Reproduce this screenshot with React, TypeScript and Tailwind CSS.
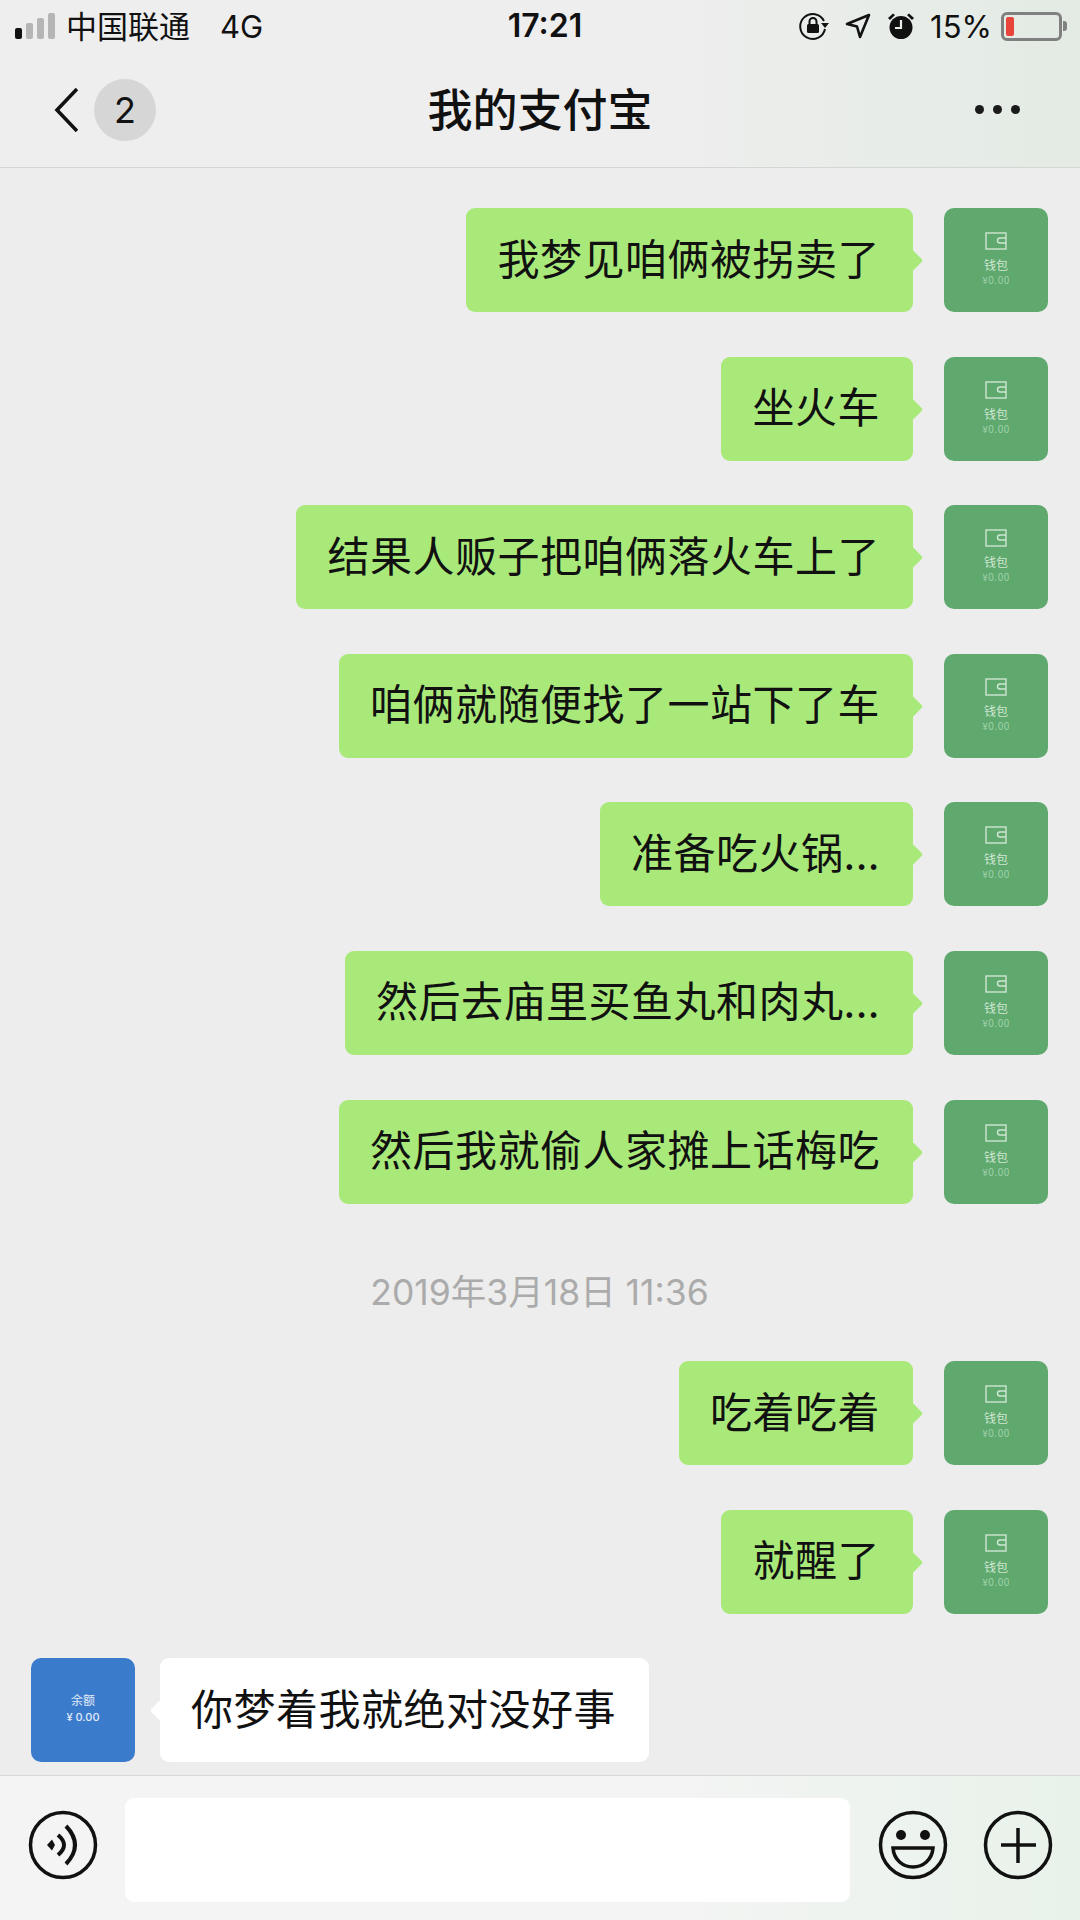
import React from "react";

const cjk = "font-['Noto_Sans_CJK_SC','Noto_Sans',sans-serif]";

const messages = [
  "我梦见咱俩被拐卖了",
  "坐火车",
  "结果人贩子把咱俩落火车上了",
  "咱俩就随便找了一站下了车",
  "准备吃火锅...",
  "然后去庙里买鱼丸和肉丸...",
  "然后我就偷人家摊上话梅吃",
];

const WalletAvatar = () => (
  <div className="flex h-[104px] w-[104px] shrink-0 flex-col items-center rounded-[10px] bg-[#5fa96f] pt-[24px]">
    <svg width="22" height="18" viewBox="0 0 22 18" fill="none" stroke="#cfe6d2" strokeWidth="1.4">
      <rect x="1" y="1" width="20" height="16" />
      <path d="M21 6h-6a2.500 2.500 0 0 0 0 5h6" />
    </svg>
    <div className="mt-[7px] text-[12px] leading-[16px] text-[#cfe6d2]">钱包</div>
    <div className="text-[10px] leading-[13px] tracking-[0.5px] text-[#9fd0a9]">¥0.00</div>
  </div>
);

const OutMessage = ({ text }: { text: string }) => (
  <div className="flex h-[104px] items-center justify-end gap-[31px]">
    <div className="relative flex h-[104px] items-center rounded-[9px] bg-[#a9e97a] pb-[7px] pl-[31px] pr-[33px] text-[42px] leading-none tracking-[0.5px] text-[#111]">
      {text}
      <div className="absolute right-[-7px] top-[45px] h-[15px] w-[15px] rotate-45 rounded-[2px] bg-[#a9e97a]" />
    </div>
    <WalletAvatar />
  </div>
);

const StatusBar = () => (
  <div className="grid h-[56px] grid-cols-3 items-center pb-[4px] text-[#111]">
    <div className="flex items-center pl-[15px]">
      <div className="flex items-end gap-[4px]">
        <div className="h-[11px] w-[7px] rounded-[2px] bg-[#111]" />
        <div className="h-[16px] w-[7px] rounded-[2px] bg-[#b5b5b5]" />
        <div className="h-[21px] w-[7px] rounded-[2px] bg-[#b5b5b5]" />
        <div className="h-[26px] w-[7px] rounded-[2px] bg-[#b5b5b5]" />
      </div>
      <span className="ml-[11px] whitespace-nowrap pb-[3px] text-[31px] leading-none">中国联通</span>
      <span className="ml-[30px] font-['Inter'] text-[31px] leading-none">4G</span>
    </div>
    <div className="pl-[10px] text-center font-['Inter'] text-[32px] font-semibold leading-none">17:21</div>
    <div className="flex items-center justify-end pr-[13px]">
      <svg width="32" height="30" viewBox="0 0 32 30" fill="none" stroke="#111" strokeWidth="2">
        <path d="M26 10A12.500 12.500 0 1 0 27 18" />
        <path d="M23 12h8l-4 5z" fill="#111" stroke="none" />
        <rect x="9" y="13" width="12" height="9" rx="1.500" fill="#111" stroke="none" />
        <path d="M11.500 13v-2.500a3.500 3.500 0 0 1 7 0V13" />
      </svg>
      <svg className="ml-[15px]" width="26" height="26" viewBox="0 0 26 26" fill="none" stroke="#111" strokeWidth="2.600" strokeLinejoin="round">
        <path d="M24 2 2 11l10 2.500L15 24z" />
      </svg>
      <svg className="ml-[16px]" width="28" height="28" viewBox="0 0 28 28" fill="#111">
        <circle cx="14" cy="15.500" r="11.500" />
        <path d="M1 6 6 1.500l2 1.500-5 5zM27 6l-5-4.500-2 1.500 5 5z" />
        <path d="M14 8v8H8" fill="none" stroke="#e8ede8" strokeWidth="2.200" />
      </svg>
      <span className="ml-[15px] font-['Inter'] text-[31px] leading-none">15%</span>
      <div className="ml-[9px] flex h-[29px] w-[61px] items-center rounded-[6px] border-[3px] border-[#808080] p-[2px]">
        <div className="h-full w-[8px] rounded-[2px] bg-[#e8443a]" />
      </div>
      <div className="ml-[1px] h-[10px] w-[4px] rounded-r-[3px] bg-[#808080]" />
    </div>
  </div>
);

const NavBar = () => (
  <div className="grid h-[112px] grid-cols-[1fr_auto_1fr] items-center border-b border-[#d5d5d5] pb-[2px] text-[#111]">
    <div className="flex items-center pb-[2px] pl-[54px]">
      <svg width="24" height="44" viewBox="0 0 24 44" fill="none" stroke="#111" strokeWidth="3.600">
        <path d="M23 1 3 22l20 21" />
      </svg>
      <div className="ml-[16px] flex h-[62px] w-[62px] items-center justify-center rounded-full bg-[#d6d6d6] font-['Inter'] text-[36px]">
        2
      </div>
    </div>
    <div className="pb-[6px] text-[45px] font-medium leading-none">我的支付宝</div>
    <div className="flex justify-end gap-[9px] pb-[2px] pr-[60px]">
      <div className="h-[9px] w-[9px] rounded-full bg-[#1a1a1a]" />
      <div className="h-[9px] w-[9px] rounded-full bg-[#1a1a1a]" />
      <div className="h-[9px] w-[9px] rounded-full bg-[#1a1a1a]" />
    </div>
  </div>
);

const InputBar = () => (
  <div className="flex h-[145px] items-start border-t border-[#d8d8d8] bg-linear-to-r from-[#f4f4f4] via-[#f4f4f4] via-60% to-[#e8f2ea] pl-[28px] pt-[22px]">
    <svg className="mt-[12px]" width="70" height="70" viewBox="0 0 70 70" fill="none" stroke="#111" strokeWidth="3.500">
      <circle cx="35" cy="35" r="32.500" />
      <path d="m19 35 5-5.500 3 5.500-3 5.500z" fill="#111" stroke="none" />
      <path d="M30 25q12 10 0 20" strokeWidth="4" />
      <path d="M38 16q18 19 0 38" strokeWidth="4" />
    </svg>
    <div className="ml-[27px] h-[104px] w-[725px] rounded-[9px] bg-white" />
    <svg className="ml-[28px] mt-[12px]" width="70" height="70" viewBox="0 0 70 70" fill="none" stroke="#111" strokeWidth="3.500">
      <circle cx="35" cy="35" r="32.500" />
      <circle cx="23" cy="25" r="5" fill="#111" stroke="none" />
      <circle cx="47" cy="25" r="5" fill="#111" stroke="none" />
      <path d="M15 38h40c-1 12-10 19-20 19S16 50 15 38z" />
    </svg>
    <svg className="ml-[35px] mt-[12px]" width="70" height="70" viewBox="0 0 70 70" fill="none" stroke="#111" strokeWidth="3.500">
      <circle cx="35" cy="35" r="32.500" />
      <path d="M35 18v35M18 35h35" />
    </svg>
  </div>
);

export default function App() {
  return (
    <div className={`flex h-[1920px] w-[1080px] flex-col overflow-hidden bg-[#ededed] ${cjk}`}>
      <div className="bg-linear-to-r from-[#eeeeee] via-[#eeeeee] via-60% to-[#e3ebe4]">
        <StatusBar />
        <NavBar />
      </div>

      <div className="flex flex-1 flex-col pl-[31px] pr-[32px] pt-[40px]">
        <div className="flex flex-col gap-[44.6px]">
          {messages.map((m) => (
            <OutMessage key={m} text={m} />
          ))}
        </div>

        <div className="mt-[62px] text-center font-['Inter','Noto_Sans_CJK_SC',sans-serif] text-[35.5px] leading-[54px] text-[#ababab]">
          2019年3月18日 11:36
        </div>

        <div className="mt-[41.5px] flex flex-col gap-[44.6px]">
          <OutMessage text="吃着吃着" />
          <OutMessage text="就醒了" />
        </div>

        <div className="mt-[44.6px] flex h-[104px] items-center gap-[25px]">
          <div className="flex h-[104px] w-[104px] shrink-0 flex-col items-center justify-center rounded-[10px] bg-[#3b7bcc] pb-[4px] text-white/85">
            <div className="text-[12px] leading-[16px]">余额</div>
            <div className="mt-[2px] font-['Inter'] text-[11px] font-medium leading-[14px]">¥ 0.00</div>
          </div>
          <div className="relative flex h-[104px] items-center rounded-[9px] bg-white pb-[7px] pl-[31px] pr-[33px] text-[42px] leading-none tracking-[0.5px] text-[#111]">
            你梦着我就绝对没好事
            <div className="absolute left-[-7px] top-[45px] h-[15px] w-[15px] rotate-45 rounded-[2px] bg-white" />
          </div>
        </div>
      </div>

      <InputBar />
    </div>
  );
}
